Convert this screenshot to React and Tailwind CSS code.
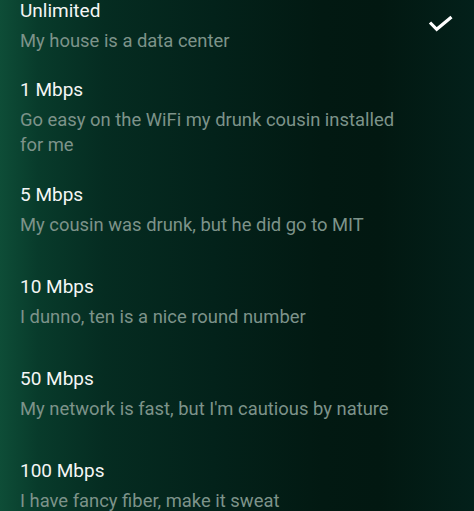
const options = [
  { title: 'Unlimited', desc: 'My house is a data center', checked: true, space: 'mb-[25px]' },
  { title: '1 Mbps', desc: 'Go easy on the WiFi my drunk cousin installed for me', space: 'mb-[26px]' },
  { title: '5 Mbps', desc: 'My cousin was drunk, but he did go to MIT', space: 'mb-[38px]' },
  { title: '10 Mbps', desc: 'I dunno, ten is a nice round number', space: 'mb-[38px]' },
  { title: '50 Mbps', desc: "My network is fast, but I'm cautious by nature", space: 'mb-[38px]' },
  { title: '100 Mbps', desc: 'I have fancy fiber, make it sweat', space: 'mb-[38px]' },
];

const CheckIcon = () => (
  <svg width="28" height="22" viewBox="0 0 28 22" fill="none" className="shrink-0 mt-[13px]">
    <polyline points="3,10.5 9.7,17.3 24.5,5" stroke="#ffffff" strokeWidth="3.2" strokeLinecap="butt" strokeLinejoin="miter" />
  </svg>
);

const App = () => {
  return (
    <div
      className="w-[474px] h-[511px] overflow-hidden bg-[linear-gradient(90deg,#0e4d37_0%,#083b2b_8%,#052c21_22%,#03221a_45%,#021912_68%,#021811_80%,#03201a_100%)]"
      style={{ fontFamily: 'Roboto, "Noto Sans", sans-serif' }}
    >
      <div className="flex flex-col mt-[-1px]">
        {options.map((opt) => (
          <div key={opt.title} className={`flex items-start gap-4 pl-5 pr-[19px] ${opt.space}`}>
            <div className="flex-1 flex flex-col">
              <span className="text-[19px] leading-[24px] text-[#f4f6f5]">{opt.title}</span>
              <span className="mt-[5px] text-[18.4px] leading-[25px] text-[#7d938a]">{opt.desc}</span>
            </div>
            {opt.checked ? <CheckIcon /> : <div className="w-[28px] shrink-0" />}
          </div>
        ))}
      </div>
    </div>
  );
};

export default App;
